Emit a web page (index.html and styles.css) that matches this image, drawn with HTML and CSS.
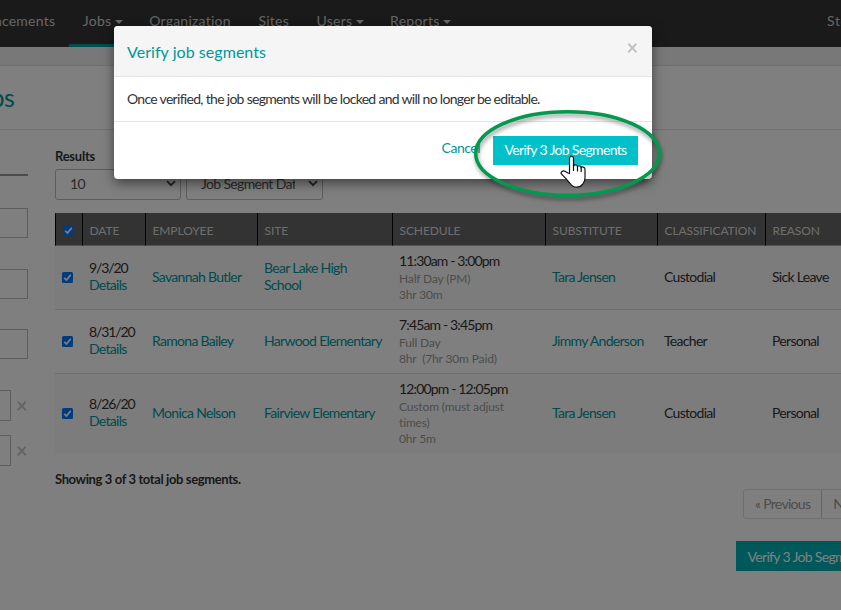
FILE: index.html
```html
<!DOCTYPE html>
<html lang="en">
<head>
    <meta charset="utf-8">
    <title>Verify job segments</title>
    <link rel="stylesheet" href="styles.css">
</head>
<body>
    <nav class="navbar">
        <ul class="nav-left">
            <li><a>Placements</a></li>
            <li class="active"><a>Jobs <b class="caret"></b></a></li>
            <li><a>Organization</a></li>
            <li><a>Sites</a></li>
            <li><a>Users <b class="caret"></b></a></li>
            <li><a>Reports <b class="caret"></b></a></li>
        </ul>
        <div class="nav-user">Steve</div>
    </nav>
    <div class="subbar"></div>
    <header class="page-header"><h1>Jobs</h1></header>

    <main class="content">
        <aside class="sidebar">
            <div class="rule"></div>
            <div class="field"></div>
            <div class="field"></div>
            <div class="field last"></div>
            <div class="field-row"><div class="field"></div><span class="close">×</span></div>
            <div class="field-row"><div class="field"></div><span class="close">×</span></div>
        </aside>

        <section class="results">
            <label class="results-label">Results</label>
            <div class="selects">
                <div class="select count">10
                    <svg width="10" height="7" viewBox="0 0 10 7"><path d="M1 1.2l4 4 4-4"/></svg>
                </div>
                <div class="select sort"><span>Job Segment Date</span>
                    <svg width="10" height="7" viewBox="0 0 10 7"><path d="M1 1.2l4 4 4-4"/></svg>
                </div>
            </div>

            <table>
                <colgroup>
                    <col class="c-check"><col class="c-date"><col class="c-employee"><col class="c-site">
                    <col class="c-schedule"><col class="c-sub"><col class="c-class"><col class="c-reason">
                </colgroup>
                <thead>
                    <tr>
                        <th><span class="check"><svg viewBox="0 0 11 11"><path d="M2.2 5.8l2.3 2.3 4.3-5.4"/></svg></span></th>
                        <th>DATE</th><th>EMPLOYEE</th><th>SITE</th><th>SCHEDULE</th>
                        <th>SUBSTITUTE</th><th>CLASSIFICATION</th><th>REASON</th>
                    </tr>
                </thead>
                <tbody>
                    <tr>
                        <td><span class="check"><svg viewBox="0 0 11 11"><path d="M2.2 5.8l2.3 2.3 4.3-5.4"/></svg></span></td>
                        <td class="two-line"><span class="date">9/3/20</span><br><a>Details</a></td>
                        <td><a>Savannah Butler</a></td>
                        <td class="two-line"><a>Bear Lake High<br>School</a></td>
                        <td><span class="time">11:30am - 3:00pm</span><small>Half Day (PM)</small><small>3hr 30m</small></td>
                        <td><a>Tara Jensen</a></td>
                        <td>Custodial</td>
                        <td>Sick Leave</td>
                    </tr>
                    <tr>
                        <td><span class="check"><svg viewBox="0 0 11 11"><path d="M2.2 5.8l2.3 2.3 4.3-5.4"/></svg></span></td>
                        <td class="two-line"><span class="date">8/31/20</span><br><a>Details</a></td>
                        <td><a>Ramona Bailey</a></td>
                        <td><a>Harwood Elementary</a></td>
                        <td><span class="time">7:45am - 3:45pm</span><small>Full Day</small><small>8hr &nbsp;(7hr 30m Paid)</small></td>
                        <td><a>Jimmy Anderson</a></td>
                        <td>Teacher</td>
                        <td>Personal</td>
                    </tr>
                    <tr>
                        <td><span class="check"><svg viewBox="0 0 11 11"><path d="M2.2 5.8l2.3 2.3 4.3-5.4"/></svg></span></td>
                        <td class="two-line"><span class="date">8/26/20</span><br><a>Details</a></td>
                        <td><a>Monica Nelson</a></td>
                        <td><a>Fairview Elementary</a></td>
                        <td><span class="time">12:00pm - 12:05pm</span><small>Custom (must adjust<br>times)</small><small>0hr 5m</small></td>
                        <td><a>Tara Jensen</a></td>
                        <td>Custodial</td>
                        <td>Personal</td>
                    </tr>
                </tbody>
            </table>

            <p class="summary">Showing 3 of 3 total job segments.</p>
            <div class="pager"><span>« Previous</span><span>Next »</span></div>
            <div class="actions"><button class="btn">Verify 3 Job Segments</button></div>
        </section>
    </main>

    <div class="backdrop">
        <div class="modal">
            <div class="modal-header">
                <h2>Verify job segments</h2>
                <span class="close">×</span>
            </div>
            <div class="modal-body">Once verified, the job segments will be locked and will no longer be editable.</div>
            <div class="modal-footer">
                <a>Cancel</a>
                <button class="btn">Verify 3 Job Segments</button>
            </div>
        </div>
    </div>

    <svg class="highlight" width="200" height="100" viewBox="0 0 200 100">
        <ellipse cx="99.5" cy="49.5" rx="91.8" ry="41.8"/>
    </svg>
    <svg class="pointer" width="27" height="34" viewBox="0 0 27 34">
        <path d="M9.500 18.500V3.500c0-3 4-3 4 0v7.300c.5-1.400 3.800-1.200 4 .7.600-1.200 3.500-.9 3.700.9.900-.9 3.800-.3 3.800 1.600v9c0 3-1.200 4.500-2.300 6.200-1.300 2-3 3-6 3-3.400 0-4.900-1.200-6.500-3.700L5.500 23.200 1.500 19.200c-1.300-2.200 1.200-4.200 3.500-3l3 1.800z"/>
        <path class="fingers" d="M13.500 10v6M17.500 11v5.500M21.200 12v5"/>
    </svg>
</body>
</html>
```
FILE: styles.css
```css
:root {
    --teal: #00969b;
    --bright: #00c1c9;
    --text: #333;
    --line: #ddd;
}

* {
    box-sizing: border-box;
}

body {
    width: 841px;
    height: 610px;
    margin: 0;
    overflow: hidden;
    background: #fff;
    color: var(--text);
    font: 14px/17px Lato, sans-serif;
    letter-spacing: -0.7px;
}

a {
    color: var(--teal);
}

/* top bar */
.navbar {
    display: flex;
    justify-content: space-between;
    height: 47px;
    overflow: hidden;
    background: #353535;
    color: #ccc;
    letter-spacing: 0.25px;
}

.nav-left {
    display: flex;
    margin: 0 0 0 -31.5px;
    padding: 0;
    list-style: none;
}

.nav-left li {
    flex: none;
    height: 47px;
    padding: 12px 13.5px 0 14px;
}

.nav-left a {
    color: #ccc;
}

.nav-left li:has(.caret) {
    padding-right: 12px;
}

.nav-left .active {
    border-bottom: 3px solid #009aa0;
}

.nav-user {
    width: 14px;
    padding-top: 12px;
    letter-spacing: 0.6px;
    white-space: nowrap;
}

.caret {
    display: inline-block;
    margin-left: 0;
    vertical-align: middle;
    border-top: 4px solid;
    border-left: 4px solid transparent;
    border-right: 4px solid transparent;
}

.subbar {
    height: 19px;
    background: #f0f0f0;
    border-bottom: 1px solid #ddd;
}

.page-header {
    height: 64px;
    border-bottom: 1px solid #e5e5e5;
}

h1 {
    margin: 0 0 0 -33px;
    padding-top: 17px;
    color: var(--teal);
    font-size: 25px;
    font-weight: 400;
    line-height: 28px;
    letter-spacing: -0.4px;
}

.content {
    display: flex;
    height: 480px;
}

/* filters */
.sidebar {
    flex: none;
    width: 28px;
    padding-top: 44px;
}

.rule {
    height: 2px;
    margin-bottom: 32px;
    background: #999;
}

.field {
    height: 30px;
    margin-bottom: 31px;
    border: 1px solid #bbb;
    border-left: 0;
}

.field + .field {
    margin-bottom: 30px;
}

.field + .last {
    margin-bottom: 31px;
}

.field-row {
    display: flex;
    align-items: center;
    margin-bottom: 14px;
}

.field-row .field {
    width: 11px;
    height: 31px;
    margin: 0 5px 0 0;
}

.close {
    color: #000;
    font-size: 20px;
    font-weight: 700;
    line-height: 20px;
    letter-spacing: 0;
    opacity: 0.22;
}

.field-row .close {
    margin-top: -2px;
}

/* results */
.results {
    flex: none;
    width: 820px;
    margin-left: 27px;
    padding-top: 18px;
}

.results-label {
    display: block;
    font-weight: 700;
    font-size: 13px;
    letter-spacing: -0.25px;
}

.selects {
    display: flex;
    gap: 5px;
    margin: 4px 0 13px;
}

.select {
    display: flex;
    justify-content: space-between;
    align-items: center;
    height: 31px;
    padding: 0 4px 2px 14px;
    border: 1px solid #bbb;
    border-radius: 3px;
    color: #555;
    letter-spacing: -0.5px;
}

.select span {
    width: 94px;
    overflow: hidden;
    letter-spacing: -0.65px;
    white-space: nowrap;
}

.select svg {
    fill: none;
    stroke: #444;
    stroke-width: 1.8;
}

.count {
    width: 126px;
}

.sort {
    width: 137px;
}

table {
    width: 820px;
    table-layout: fixed;
    border-collapse: separate;
    border-spacing: 0;
}

.c-check { width: 27px; }
.c-date { width: 63px; }
.c-employee { width: 112px; }
.c-site { width: 135px; }
.c-schedule { width: 153px; }
.c-sub { width: 112px; }
.c-class { width: 108px; }
.c-reason { width: 110px; }

th {
    height: 33px;
    padding: 3px 0 0 6.5px;
    border-left: 1px solid #000;
    border-bottom: 1px solid #aaa;
    background: #666;
    color: #ddd;
    font-size: 12px;
    font-weight: 400;
    line-height: 16px;
    letter-spacing: -0.1px;
    text-align: left;
}

td {
    height: 63px;
    padding: 6px 0 8px 7px;
    vertical-align: middle;
}

td:first-child {
    padding: 7px 0 7px 7px;
}

td.two-line {
    padding: 5px 0 9px 7px;
}

tbody tr + tr td {
    height: 64px;
    border-top: 1px solid #ddd;
}

tbody tr:nth-child(odd) {
    background: #f9f9f9;
}

td small {
    display: block;
    position: relative;
    top: 2px;
    color: #999;
    font-size: 12px;
    line-height: 16px;
    letter-spacing: -0.15px;
}

.date {
    letter-spacing: -1.1px;
}

.time {
    letter-spacing: -0.85px;
}

.check {
    display: block;
    width: 11px;
    height: 11px;
    border-radius: 1.5px;
    background: #0075ff;
}

.check svg {
    display: block;
    fill: none;
    stroke: #fff;
    stroke-width: 1.7;
}

.summary {
    margin: 18px 0 1px;
    font-size: 13px;
    font-weight: 700;
    letter-spacing: -0.38px;
}

.pager {
    display: flex;
    width: 132px;
    height: 30px;
    margin: 0 0 0 688px;
    border: 1px solid #ddd;
    border-radius: 3px;
    color: #999;
    line-height: 28px;
}

.pager span {
    padding: 0 11px;
    white-space: nowrap;
}

.pager span + span {
    border-left: 1px solid #ccc;
}

.actions {
    margin: 22px 0 0 681px;
}

.btn {
    display: block;
    width: 145px;
    height: 29px;
    padding: 0 0 2px;
    border: 0;
    background: var(--bright);
    color: #fff;
    font: 14px/27px Lato, sans-serif;
    letter-spacing: -0.66px;
    white-space: nowrap;
}

.actions .btn {
    height: 30px;
    padding-bottom: 0;
    background: #00b0b7;
}

/* dialog */
.backdrop {
    position: absolute;
    top: 0;
    left: 0;
    width: 841px;
    height: 610px;
    padding: 26px 0 0 114px;
    background: rgba(0, 0, 0, 0.5);
}

.modal {
    width: 538px;
    height: 153px;
    overflow: hidden;
    border-radius: 4px;
    background: #fff;
    box-shadow: 0 4px 12px rgba(0, 0, 0, 0.5);
}

.modal-header {
    display: flex;
    justify-content: space-between;
    height: 51px;
    padding: 16px 14px 0 13px;
    border-bottom: 1px solid #e5e5e5;
    background: #f5f5f5;
}

h2 {
    margin: 0;
    color: var(--teal);
    font-size: 16px;
    font-weight: 400;
    line-height: 20px;
    letter-spacing: 0.05px;
}

.modal-header .close {
    margin-top: -5px;
}

.modal-body {
    height: 45px;
    padding: 13px;
    border-bottom: 1px solid #e5e5e5;
    white-space: nowrap;
}

.modal-footer {
    display: flex;
    justify-content: flex-end;
    gap: 13px;
    padding: 14px 14px 0 0;
}

.modal-footer a {
    padding-top: 3px;
    letter-spacing: -0.5px;
}

.highlight {
    position: absolute;
    top: 104px;
    left: 468px;
    fill: none;
    stroke: #009a4e;
    stroke-width: 3.5;
    filter: drop-shadow(1px 3px 2px rgba(0, 0, 0, 0.4));
}

.pointer {
    position: absolute;
    top: 155px;
    left: 560px;
    fill: #fff;
    stroke: #111;
    stroke-width: 1.2;
}

.pointer .fingers {
    fill: none;
}
```
